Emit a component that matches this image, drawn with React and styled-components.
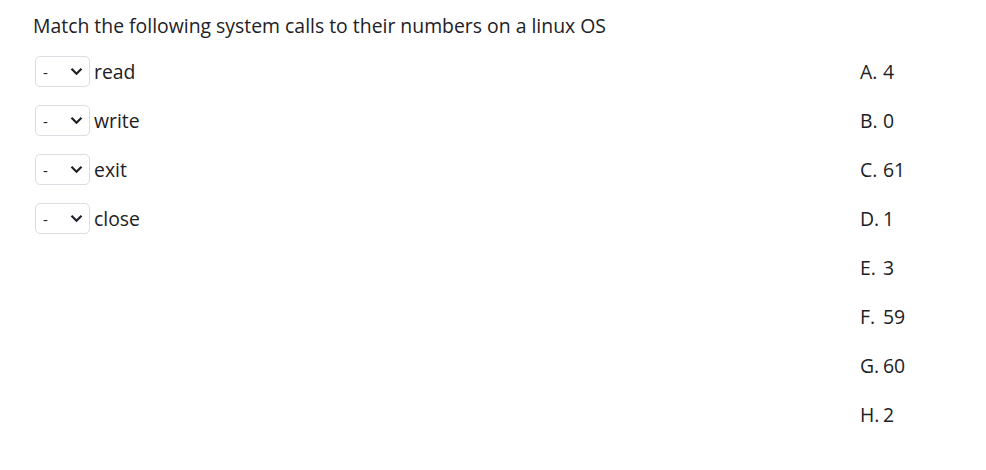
import React from "react";
import styled, { createGlobalStyle } from "styled-components";

const GlobalStyle = createGlobalStyle`
  body {
    margin: 0;
    background: #ffffff;
    font-family: "Open Sans", "Noto Sans", sans-serif;
    color: #1d2125;
  }
`;

const Page = styled.div`
  width: 986px;
  height: 470px;
  padding: 13px 33px 0;
  box-sizing: border-box;
`;

const Title = styled.div`
  font-size: 19.4px;
  line-height: 26px;
  height: 26px;
`;

const Board = styled.div`
  display: grid;
  grid-template-columns: 827px 1fr;
  margin-top: 8px;
`;

const Column = styled.div`
  display: flex;
  flex-direction: column;
`;

const Row = styled.div`
  height: 49px;
  display: flex;
  align-items: center;
  gap: 4px;
  font-size: 19.4px;
`;

const SelectWrap = styled.div`
  position: relative;
  width: 55px;
  height: 31px;
  margin-left: 2px;
`;

const Select = styled.select`
  appearance: none;
  width: 100%;
  height: 100%;
  border: 1px solid #dadde1;
  border-radius: 5px;
  background: #fff;
  padding: 0 0 0 7px;
  font-family: "Open Sans", "Noto Sans", sans-serif;
  font-size: 15px;
  color: #1d2125;
  outline: none;
`;

const Chevron = styled.svg`
  position: absolute;
  left: 35px;
  top: 11px;
  pointer-events: none;
`;

const Letter = styled.span`
  display: inline-block;
  width: 23px;
`;

const calls = ["read", "write", "exit", "close"];
const answers = [
  ["A", "4"],
  ["B", "0"],
  ["C", "61"],
  ["D", "1"],
  ["E", "3"],
  ["F", "59"],
  ["G", "60"],
  ["H", "2"],
];

const App = () => {
  return (
    <Page>
      <GlobalStyle />
      <Title>Match the following system calls to their numbers on a linux OS</Title>
      <Board>
        <Column>
          {calls.map((c) => (
            <Row key={c}>
              <SelectWrap>
                <Select defaultValue="-">
                  <option value="-">-</option>
                  {answers.map(([k]) => (
                    <option key={k} value={k}>
                      {k}
                    </option>
                  ))}
                </Select>
                <Chevron width="13" height="9" viewBox="0 0 13 9">
                  <path d="M1.5 1.8 L6.5 6.8 L11.5 1.8" fill="none" stroke="#1d2125" strokeWidth="2.2" />
                </Chevron>
              </SelectWrap>
              <span>{c}</span>
            </Row>
          ))}
        </Column>
        <Column>
          {answers.map(([k, v]) => (
            <Row key={k}>
              <div>
                <Letter>{k}.</Letter>
                {v}
              </div>
            </Row>
          ))}
        </Column>
      </Board>
    </Page>
  );
};

export default App;
